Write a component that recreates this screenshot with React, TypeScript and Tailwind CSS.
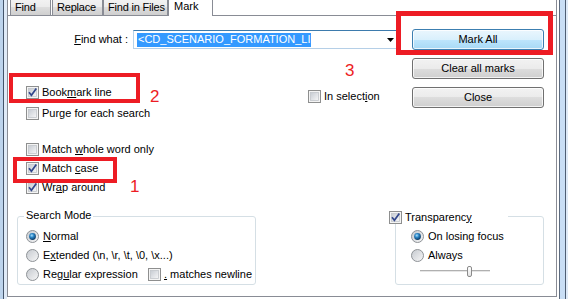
import type { ReactNode } from "react";

/* -- Win7 style primitives -- */

function CheckBox({ checked = false }: { checked?: boolean }) {
  return (
    <svg width="13" height="13" viewBox="0 0 13 13" className="shrink-0">
      <defs>
        <linearGradient id="cbFill" x1="0" y1="0" x2="1" y2="1">
          <stop offset="0" stopColor="#c6cbd2" />
          <stop offset="1" stopColor="#f7f7f8" />
        </linearGradient>
      </defs>
      <rect x="0.5" y="0.5" width="12" height="12" fill="#f4f4f4" stroke="#8e8f8f" />
      <rect x="2.5" y="2.5" width="8" height="8" fill="url(#cbFill)" stroke="#c2c6cb" strokeWidth="0.8" />
      {checked && (
        <path d="M3 6.3 L5.4 9.3 L10.3 2.6" fill="none" stroke="#31468b" strokeWidth="1.7" />
      )}
    </svg>
  );
}

function RadioDot({ on = false }: { on?: boolean }) {
  return (
    <svg width="13" height="13" viewBox="0 0 13 13" className="shrink-0">
      <defs>
        <linearGradient id="rbFill" x1="0" y1="0" x2="1" y2="1">
          <stop offset="0" stopColor="#c4c8ce" />
          <stop offset="1" stopColor="#f8f8f8" />
        </linearGradient>
        <radialGradient id="rbDot" cx="0.4" cy="0.35" r="0.65">
          <stop offset="0" stopColor="#a9e0fb" />
          <stop offset="0.45" stopColor="#2a85c6" />
          <stop offset="1" stopColor="#0d3a63" />
        </radialGradient>
      </defs>
      <circle cx="6.5" cy="6.5" r="6" fill="url(#rbFill)" stroke="#8f9397" />
      {on && <circle cx="6.5" cy="6.5" r="3.4" fill="url(#rbDot)" />}
    </svg>
  );
}

function Acc({ text, at }: { text: string; at?: number }) {
  if (at === undefined) return <>{text}</>;
  return (
    <>
      {text.slice(0, at)}
      <u>{text[at]}</u>
      {text.slice(at + 1)}
    </>
  );
}

function CheckRow({
  label,
  at,
  checked,
  h,
}: {
  label: string;
  at?: number;
  checked?: boolean;
  h: string;
}) {
  return (
    <div className={`flex items-center gap-[3px] ${h}`}>
      <CheckBox checked={checked} />
      <span className="whitespace-nowrap">
        <Acc text={label} at={at} />
      </span>
    </div>
  );
}

function RadioRow({ children, on }: { children: ReactNode; on?: boolean }) {
  return (
    <div className="flex items-center gap-[4px] h-[19px] whitespace-nowrap">
      <RadioDot on={on} />
      {children}
    </div>
  );
}

function Btn({ children, hot }: { children: ReactNode; hot?: boolean }) {
  return (
    <div
      className={`h-[21px] rounded-[3px] border flex items-center justify-center shadow-[inset_0_0_0_1px_rgba(255,255,255,0.75)] ${
        hot
          ? "border-[#3c7fb1] bg-[linear-gradient(to_bottom,#eaf6fd_0%,#d9f0fc_50%,#bee6fd_50%,#a7d9f5_100%)]"
          : "border-[#707070] bg-[linear-gradient(to_bottom,#f2f2f2_0%,#ebebeb_50%,#dddddd_50%,#cfcfcf_100%)]"
      }`}
    >
      {children}
    </div>
  );
}

function Tab({ label, w }: { label: string; w: string }) {
  return (
    <div
      className={`${w} h-[16px] border-x border-b border-[#898c95] flex items-center pl-[4px] whitespace-nowrap overflow-hidden tracking-[-0.2px] bg-[linear-gradient(to_bottom,#f2f2f2_0%,#ebebeb_50%,#dddddd_50%,#cfcfcf_100%)]`}
    >
      {label}
    </div>
  );
}

export default function App() {
  return (
    <div className="relative w-[568px] h-[299px] bg-white flex overflow-hidden font-['Liberation_Sans',Arial,sans-serif] text-[11px] leading-none text-black">
      {/* left window frame */}
      <div className="flex h-full">
        <div className="w-[3px] bg-[#bcd3ec]" />
        <div className="w-[1px] bg-[#44546a]" />
        <div className="w-[3px] bg-[#dfeaf7]" />
      </div>

      {/* dialog body */}
      <div className="w-[550px] flex flex-col">
        {/* tabs */}
        <div className="flex h-[16px]">
          <div className="w-[3px] border-l border-b border-[#898c95]" />
          <Tab label="Find" w="w-[41px]" />
          <div className="w-[1px] border-b border-[#898c95]" />
          <Tab label="Replace" w="w-[51px]" />
          <Tab label="Find in Files" w="w-[65px]" />
          <div className="w-[45px] h-[16px] border-x border-[#898c95] bg-white flex items-center pl-[5px] pb-[4px]">
            Mark
          </div>
          <div className="flex-1 border-r border-b border-[#898c95]" />
        </div>

        {/* tab panel */}
        <div className="h-[281px] border-x border-b border-[#898c95] flex flex-col">
          <div className="flex pt-[13px]">
            <div className="w-[390px] flex flex-col">
              <div className="h-[21px] flex items-center justify-end">
                <span className="mr-[5px]">
                  <Acc text="Find what :" at={0} />
                </span>
                <div className="w-[265px] h-[19px] border border-t-[#3d7bad] border-x-[#b7d3ea] border-b-[#b5cfe7] flex items-center pl-[3px] pr-[3px]">
                  <span className="bg-[#3399ff] text-white h-[14px] flex items-center px-[1px] whitespace-nowrap">
                    {"<CD_SCENARIO_FORMATION_LI"}
                  </span>
                  <div className="flex-1" />
                  <svg width="7" height="4" viewBox="0 0 7 4">
                    <path d="M0 0 H7 L3.5 4 Z" fill="#000" />
                  </svg>
                </div>
              </div>

              <div className="flex mt-[32px]">
                <div className="w-[300px] pl-[18px] flex flex-col">
                  <CheckRow label="Bookmark line" at={4} checked h="h-[21px]" />
                  <CheckRow label="Purge for each search" h="h-[21px]" />
                  <div className="h-[16px]" />
                  <CheckRow label="Match whole word only" at={6} h="h-[19px]" />
                  <CheckRow label="Match case" at={6} checked h="h-[19px]" />
                  <CheckRow label="Wrap around" at={2} checked h="h-[19px]" />
                </div>
                <div className="mt-[4px]">
                  <CheckRow label="In selection" at={9} h="h-[21px]" />
                </div>
              </div>
            </div>

            <div className="ml-[14px] w-[132px] flex flex-col gap-[8px]">
              <Btn hot>Mark All</Btn>
              <Btn>Clear all marks</Btn>
              <Btn>Close</Btn>
            </div>
          </div>

          {/* group boxes */}
          <div className="flex mt-auto mb-[11px]">
            <div className="relative ml-[9px] w-[239px] h-[69px] border border-[#d5dfe5] rounded-[3px] pt-[10px] pl-[8px]">
              <div className="absolute left-[6px] -top-[8px] bg-white px-[2px] h-[13px] flex items-center">
                Search Mode
              </div>
              <RadioRow on>
                <span>
                  <Acc text="Normal" at={0} />
                </span>
              </RadioRow>
              <RadioRow>
                <span>
                  <Acc text={"Extended (\\n, \\r, \\t, \\0, \\x...)"} at={1} />
                </span>
              </RadioRow>
              <div className="flex items-center">
                <div className="w-[122px]">
                  <RadioRow>
                    <span>
                      <Acc text="Regular expression" at={3} />
                    </span>
                  </RadioRow>
                </div>
                <CheckRow label=". matches newline" at={0} h="h-[19px]" />
              </div>
            </div>

            <div className="relative ml-[139px] w-[149px] h-[69px] border border-[#d5dfe5] rounded-[3px] pt-[10px] pl-[15px]">
              <div className="absolute -left-[7px] -top-[7px] w-[119px] h-[14px] bg-white flex items-center">
                <CheckRow label="Transparency" at={11} checked h="h-[14px]" />
              </div>
              <RadioRow on>
                <span>On losing focus</span>
              </RadioRow>
              <RadioRow>
                <span>Always</span>
              </RadioRow>
              <div className="ml-[9px] h-[13px] flex items-center">
                <div className="w-[47px] h-[3px] border-t border-t-[#b0b0b0] bg-[#e6e6e6] border-b border-b-white" />
                <div className="w-[5px] h-[11px] rounded-[2px] border border-[#8a8a8a] bg-[linear-gradient(to_bottom,#ffffff,#e4e4e4)]" />
                <div className="w-[18px] h-[3px] border-t border-t-[#b0b0b0] bg-[#e6e6e6] border-b border-b-white" />
              </div>
            </div>
          </div>
        </div>
        <div className="flex-1" />
      </div>

      {/* right window frame */}
      <div className="flex h-full">
        <div className="w-[2px] bg-white" />
        <div className="w-[1px] bg-[#5d6b7e]" />
        <div className="w-[5px] bg-[#c9def5]" />
        <div className="w-[1px] bg-[#4f5e73]" />
        <div className="w-[2px] bg-[#dfeaf7]" />
      </div>

      {/* red annotations */}
      <div className="absolute left-[396px] top-[11px] w-[157px] h-[44px] border-[5px] border-[#ed1c24]" />
      <div className="absolute left-[9px] top-[73px] w-[131px] h-[30px] border-[4px] border-[#ed1c24]" />
      <div className="absolute left-[13px] top-[157px] w-[104px] h-[26px] border-[4px] border-[#ed1c24]" />
      <span className="absolute left-[345px] top-[62px] text-[17px] text-[#ed1c24]">3</span>
      <span className="absolute left-[150px] top-[88px] text-[17px] text-[#ed1c24]">2</span>
      <span className="absolute left-[130px] top-[178px] text-[17px] text-[#ed1c24]">1</span>
    </div>
  );
}
